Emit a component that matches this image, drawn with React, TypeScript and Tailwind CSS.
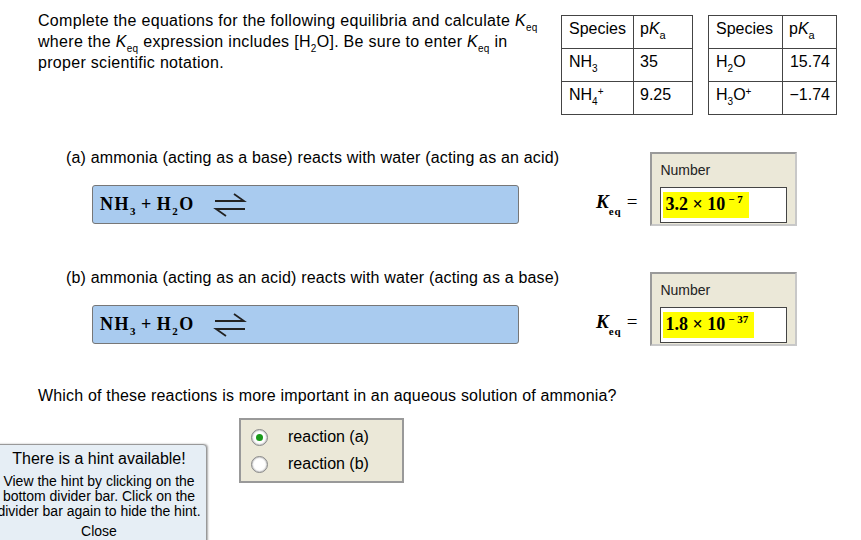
const Sub = ({ children }: { children: React.ReactNode }) => (
  <sub className="text-[10px] leading-none align-[-2px]">{children}</sub>
);

const Formula = () => (
  <span className="font-['Liberation_Serif',serif] text-[18px] font-bold tracking-[1.5px] text-black">
    NH
    <sub className="relative top-[5px] text-[11px] leading-none align-baseline">3</sub>
    <span className="mx-[4px] font-bold">+</span>H
    <sub className="relative top-[5px] text-[11px] leading-none align-baseline">2</sub>O
  </span>
);

const EqArrow = () => (
  <svg width="34" height="26" viewBox="0 0 34 26" className="ml-[18px]">
    <path d="M2 9 H31 L21 2" fill="none" stroke="#222" strokeWidth="1.8" />
    <path d="M32 17 H3 L13 24" fill="none" stroke="#222" strokeWidth="1.8" />
  </svg>
);

const Keq = () => (
  <div className="flex items-baseline font-['Liberation_Serif',serif] font-bold text-black">
    <span className="text-[19px] italic">K</span>
    <span className="relative top-[7px] text-[11px] tracking-[1px]">eq</span>
    <span className="ml-[5px] text-[19px] font-normal">=</span>
  </div>
);

const NumberBox = ({ mant, exp }: { mant: string; exp: string }) => (
  <div className="flex h-[74px] w-[147px] flex-col border-2 border-t-[#9a9a9a] border-l-[#9a9a9a] border-b-[#c8c8c8] border-r-[#c8c8c8] bg-[#ebe8d8] px-[8px] pt-[8px]">
    <span className="text-[14px] leading-[16px] text-[#222]">Number</span>
    <div className="mt-[9px] flex h-[36px] items-center border border-[#444] bg-white px-[2px]">
      <span className="bg-[#ffff00] py-[2px] pr-[6px] pl-[2px] font-['Liberation_Serif',serif] text-[18px] leading-[20px] font-bold text-black">
        {mant} × 10
        <span className="relative -top-[7px] ml-[3px] text-[11px]">− {exp}</span>
      </span>
    </div>
  </div>
);

const Reaction = ({ label, mant, exp }: { label: string; mant: string; exp: string }) => (
  <div className="flex">
    <div className="flex w-[556px] flex-col">
      <div className="pl-[66px] text-[16px] leading-[18px] tracking-[0.18px] whitespace-nowrap">{label}</div>
      <div className="mt-[18px] ml-[92px] flex h-[39px] w-[427px] items-center rounded-[3px] border border-[#777] bg-[#a9cbef] pl-[7px]">
        <Formula />
        <EqArrow />
      </div>
    </div>
    <div className="mt-[3px] ml-[40px] flex items-end">
      <div className="mb-[10px]">
        <Keq />
      </div>
      <div className="ml-[13px]">
        <NumberBox mant={mant} exp={exp} />
      </div>
    </div>
  </div>
);

const Table = ({ rows, w1, w2 }: { rows: React.ReactNode[][]; w1: string; w2: string }) => (
  <table className="border-collapse text-[16px] leading-[18px]">
    <tbody>
      {rows.map((r, i) => (
        <tr key={i} className="h-[33px]">
          <td className={`border border-[#444] px-[7px] pt-[4px] align-top ${w1}`}>{r[0]}</td>
          <td className={`border border-[#444] px-[6px] pt-[4px] align-top ${w2}`}>{r[1]}</td>
        </tr>
      ))}
    </tbody>
  </table>
);

const Radio = ({ on }: { on?: boolean }) => (
  <div className="flex h-[17px] w-[17px] items-center justify-center rounded-full border border-[#888] bg-[radial-gradient(circle,#ffffff_55%,#c8c8c8_100%)] shadow-[inset_0_0_2px_#999]">
    {on && <div className="h-[7px] w-[7px] rounded-full bg-[#1a9a1a]" />}
  </div>
);

const App = () => {
  const ka = (
    <>
      p<i>K</i>
      <sub className="text-[11px] align-[-2px]">a</sub>
    </>
  );
  return (
    <div className="relative h-[540px] w-[861px] overflow-hidden bg-white font-['Liberation_Sans',Arial,sans-serif] text-black">
      <div className="flex pt-[10px]">
        <p className="ml-[38px] w-[498px] text-[16px] leading-[21px] tracking-[0.3px] whitespace-nowrap">
          Complete the equations for the following equilibria and calculate <i>K</i>
          <Sub>eq</Sub>
          <br />
          where the <i>K</i>
          <Sub>eq</Sub> expression includes [H<Sub>2</Sub>O]. Be sure to enter <i>K</i>
          <Sub>eq</Sub> in
          <br />
          proper scientific notation.
        </p>
        <div className="mt-[5px] ml-[25px] flex gap-[15px]">
          <Table
            w1="w-[72px]"
            w2="w-[59px]"
            rows={[
              ["Species", ka],
              [<>NH<Sub>3</Sub></>, "35"],
              [<>NH<Sub>4</Sub><sup className="text-[10px]">+</sup></>, "9.25"],
            ]}
          />
          <Table
            w1="w-[74px]"
            w2="w-[54px]"
            rows={[
              ["Species", ka],
              [<>H<Sub>2</Sub>O</>, <span className="block text-right">15.74</span>],
              [<>H<Sub>3</Sub>O<sup className="text-[10px]">+</sup></>, <span className="block text-right">−1.74</span>],
            ]}
          />
        </div>
      </div>

      <div className="mt-[34px]">
        <Reaction label="(a) ammonia (acting as a base) reacts with water (acting as an acid)" mant="3.2" exp="7" />
      </div>
      <div className="mt-[43px]">
        <Reaction label="(b) ammonia (acting as an acid) reacts with water (acting as a base)" mant="1.8" exp="37" />
      </div>

      <p className="mt-[41px] ml-[38px] text-[16px] leading-[18px] tracking-[0.18px]">
        Which of these reactions is more important in an aqueous solution of ammonia?
      </p>

      <div className="mt-[13px] ml-[239px] flex w-[165px] flex-col gap-[9px] border-2 border-[#999] bg-[#ebe8d8] py-[8px] pl-[10px]">
        <label className="flex items-center gap-[20px] text-[16px] leading-[18px]">
          <Radio on />
          reaction (a)
        </label>
        <label className="flex items-center gap-[20px] text-[16px] leading-[18px]">
          <Radio />
          reaction (b)
        </label>
      </div>

      <div className="absolute top-[444px] left-[-9px] w-[216px] rounded-tr-[4px] border border-[#999] bg-[#e6eef5] pt-[4px] pb-[6px] text-center shadow-[1px_0_2px_#aaa]">
        <div className="text-[16px] leading-[20px]">There is a hint available!</div>
        <div className="mt-[5px] text-[14px] leading-[15px]">
          View the hint by clicking on the
          <br />
          bottom divider bar. Click on the
          <br />
          divider bar again to hide the hint.
        </div>
        <div className="mt-[5px] text-[14px] leading-[15px]">Close</div>
      </div>
    </div>
  );
};

export default App;
